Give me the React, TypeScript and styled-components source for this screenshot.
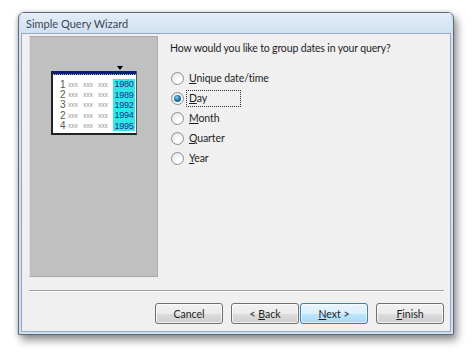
import React, { useState } from 'react';
import styled, { createGlobalStyle } from 'styled-components';

const OPTIONS = [
  { id: 'unique', key: 'U', rest: 'nique date/time' },
  { id: 'day', key: 'D', rest: 'ay' },
  { id: 'month', key: 'M', rest: 'onth' },
  { id: 'quarter', key: 'Q', rest: 'uarter' },
  { id: 'year', key: 'Y', rest: 'ear' },
];

const ROWS = [
  { n: '1', year: '1980' },
  { n: '2', year: '1989' },
  { n: '3', year: '1992' },
  { n: '2', year: '1994' },
  { n: '4', year: '1995' },
];

const App = () => {
  const [group, setGroup] = useState('day');

  return (
    <Page>
      <GlobalStyle />
      <Window>
        <TitleBar>Simple Query Wizard</TitleBar>
        <Client>
          <Main>
            <PreviewPanel>
              <Arrow />
              <Sheet>
                <SheetHeader />
                <SheetBody>
                  {ROWS.map((r, i) => (
                    <SheetRow key={i}>
                      <NumCell>{r.n}</NumCell>
                      <XCell>xxx</XCell>
                      <XCell>xxx</XCell>
                      <XCell>xxx</XCell>
                      <YearCell>{r.year}</YearCell>
                    </SheetRow>
                  ))}
                </SheetBody>
              </Sheet>
            </PreviewPanel>
            <Options>
              <Question>How would you like to group dates in your query?</Question>
              <RadioList>
                {OPTIONS.map((o) => (
                  <RadioRow key={o.id} onClick={() => setGroup(o.id)}>
                    <Radio $checked={group === o.id} />
                    <RadioLabel $focused={group === o.id}>
                      <u>{o.key}</u>{o.rest}
                    </RadioLabel>
                  </RadioRow>
                ))}
              </RadioList>
            </Options>
          </Main>
          <Separator />
          <ButtonBar>
            <Button>Cancel</Button>
            <ButtonPair>
              <Button>&lt; <u>B</u>ack</Button>
              <Button $default><u>N</u>ext &gt;</Button>
            </ButtonPair>
            <Button><u>F</u>inish</Button>
          </ButtonBar>
        </Client>
      </Window>
    </Page>
  );
};

export default App;

const GlobalStyle = createGlobalStyle`
  html, body {
    margin: 0;
    background: #ffffff;
    font-family: Lato, "Noto Sans", sans-serif;
  }
`;

const Page = styled.div({
  width: '474px',
  height: '357px',
  padding: '12px 0 0 18px',
  boxSizing: 'border-box',
});

const Window = styled.div({
  width: '436px',
  height: '323px',
  boxSizing: 'border-box',
  display: 'flex',
  flexDirection: 'column',
  border: '1px solid #5d6b7b',
  borderRadius: '6px 6px 0 0',
  padding: '0 2px 2px 2px',
  background: 'linear-gradient(#d4e3f3, #cfe0f2)',
  boxShadow: '3px 5px 9px rgba(0,0,0,0.45), -1px 0 4px rgba(0,0,0,0.15)',
});

const TitleBar = styled.div({
  height: '20px',
  display: 'flex',
  alignItems: 'center',
  paddingLeft: '5px',
  fontSize: '11px',
  color: '#3c4656',
  background: 'linear-gradient(#e3edf8, #d1e1f2)',
});

const Client = styled.div({
  flex: 1,
  display: 'flex',
  flexDirection: 'column',
  background: '#f0f0f0',
  border: '1px solid #97abc0',
});

const Main = styled.div({
  display: 'flex',
  gap: '12px',
  padding: '2px 0 0 7px',
});

const PreviewPanel = styled.div({
  position: 'relative',
  width: '129px',
  height: '241px',
  boxSizing: 'border-box',
  background: '#c0c0c0',
  border: '1px solid #a9a9a9',
  borderLeftColor: '#e0e0e0',
  padding: '34px 0 0 21px',
});

const Arrow = styled.div({
  position: 'absolute',
  left: '87px',
  top: '29px',
  width: 0,
  height: 0,
  borderLeft: '3px solid transparent',
  borderRight: '3px solid transparent',
  borderTop: '4px solid #000',
});

const Sheet = styled.div({
  width: '86px',
  height: '64px',
  boxSizing: 'border-box',
  background: '#fff',
  borderLeft: '2px solid #222',
  borderBottom: '2px solid #222',
  borderRight: '1px solid #555',
  display: 'flex',
  flexDirection: 'column',
});

const SheetHeader = styled.div({
  height: '3px',
  background: '#0b1f7a',
  borderBottom: '1px dotted #b8b8b8',
});

const SheetBody = styled.div({
  paddingTop: '4px',
  paddingLeft: '7px',
});

const SheetRow = styled.div({
  display: 'flex',
  alignItems: 'center',
  height: '10.4px',
});

const NumCell = styled.span({
  width: '8px',
  fontSize: '10px',
  color: '#555',
  fontFamily: '"Liberation Sans", sans-serif',
});

const XCell = styled.span({
  width: '15px',
  fontSize: '7px',
  letterSpacing: '-0.3px',
  color: '#999',
  fontFamily: '"Liberation Sans", sans-serif',
});

const YearCell = styled.span({
  width: '22px',
  height: '100%',
  display: 'flex',
  alignItems: 'center',
  justifyContent: 'center',
  background: '#33e6e6',
  fontSize: '9px',
  letterSpacing: '-0.3px',
  color: '#1b2f8f',
  fontFamily: '"Liberation Sans", sans-serif',
});

const Options = styled.div({
  display: 'flex',
  flexDirection: 'column',
  paddingTop: '5px',
});

const Question = styled.div({
  fontSize: '10.5px',
  letterSpacing: '-0.15px',
  color: '#1e1e1e',
  height: '14px',
  lineHeight: '14px',
});

const RadioList = styled.div({
  display: 'flex',
  flexDirection: 'column',
  gap: '3px',
  marginTop: '15px',
});

const RadioRow = styled.div({
  display: 'flex',
  alignItems: 'center',
  height: '17px',
  cursor: 'default',
});

const Radio = styled.span<{ $checked?: boolean }>`
  position: relative;
  width: 13px;
  height: 13px;
  box-sizing: border-box;
  margin-left: 1px;
  border-radius: 50%;
  border: 1px solid #8e8f8f;
  background: radial-gradient(circle at 60% 65%, #ffffff 20%, #dcdcdc 100%);
  &::after {
    content: '';
    display: ${(p) => (p.$checked ? 'block' : 'none')};
    position: absolute;
    left: 2px;
    top: 2px;
    width: 7px;
    height: 7px;
    border-radius: 50%;
    background: radial-gradient(circle at 40% 35%, #7fd0f0 0%, #2a7aa8 45%, #0f3d5e 100%);
  }
`;

const RadioLabel = styled.span<{ $focused?: boolean }>`
  box-sizing: border-box;
  height: 17px;
  line-height: 15px;
  margin-left: 2px;
  padding: 0 2px;
  font-size: 10.5px;
  letter-spacing: -0.1px;
  color: #1e1e1e;
  width: ${(p) => (p.$focused ? '55px' : 'auto')};
  border: 1px dotted ${(p) => (p.$focused ? '#333' : 'transparent')};
`;

const Separator = styled.div({
  margin: '13px 6px 0 7px',
  borderTop: '1px solid #a0a0a0',
  borderBottom: '1px solid #ffffff',
});

const ButtonBar = styled.div({
  display: 'flex',
  justifyContent: 'flex-end',
  gap: '8px',
  padding: '11px 6px 0 0',
});

const ButtonPair = styled.div({
  display: 'flex',
  gap: '1px',
});

const Button = styled.button<{ $default?: boolean }>`
  width: 68px;
  height: 21px;
  padding: 0;
  font-family: Lato, "Noto Sans", sans-serif;
  font-size: 10.5px;
  color: #1e1e1e;
  border-radius: 3px;
  border: 1px solid ${(p) => (p.$default ? '#3c7fb1' : '#707070')};
  background: ${(p) =>
    p.$default
      ? 'linear-gradient(#eaf6fd 0%, #d9f0fc 50%, #bee6fd 51%, #a7d9f5 100%)'
      : 'linear-gradient(#f2f2f2 0%, #ebebeb 50%, #dddddd 51%, #cfcfcf 100%)'};
  box-shadow: inset 0 0 0 1px ${(p) => (p.$default ? 'rgba(255,255,255,0.6)' : 'rgba(255,255,255,0.7)')};
`;
